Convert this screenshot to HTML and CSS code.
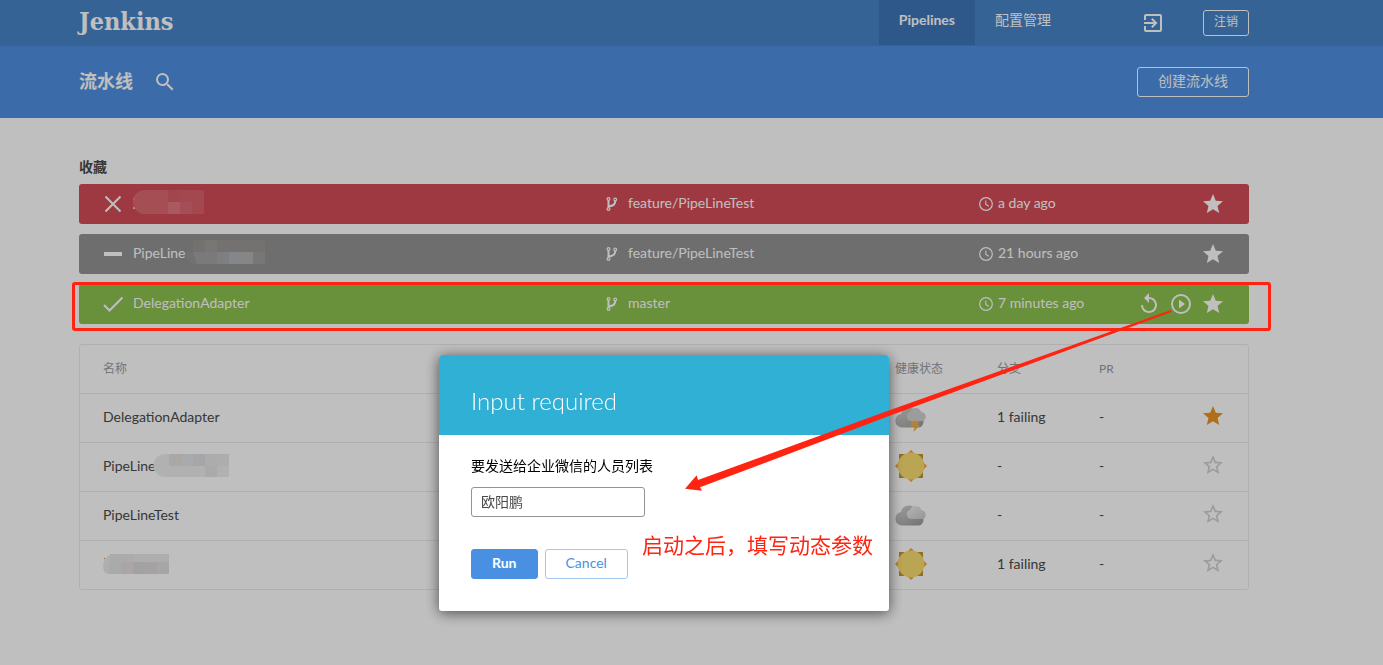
FILE: index.html
```html
<!DOCTYPE html>
<html lang="zh-CN">
<head>
  <meta charset="UTF-8">
  <title>Jenkins Blue Ocean</title>
  <link rel="stylesheet" href="styles.css">
</head>
<body>
  <svg class="sprite" aria-hidden="true">
    <defs>
      <linearGradient id="cloudBack" x1="0" y1="0" x2="1" y2="1">
        <stop offset="0" stop-color="#d4d4d4"/>
        <stop offset="1" stop-color="#989898"/>
      </linearGradient>
      <linearGradient id="cloudFront" x1="0" y1="0" x2="1" y2="1">
        <stop offset="0" stop-color="#f0f0f0"/>
        <stop offset="1" stop-color="#c9c9c9"/>
      </linearGradient>
    </defs>
    <symbol id="star" viewBox="0 0 24 24">
      <path d="M12 17.27L18.18 21l-1.64-7.03L22 9.24l-7.19-.61L12 2 9.19 8.63 2 9.24l5.46 4.73L5.82 21z"/>
    </symbol>
    <symbol id="star-border" viewBox="0 0 24 24">
      <path d="M22 9.24l-7.19-.62L12 2 9.19 8.63 2 9.24l5.46 4.73L5.82 21 12 17.27 18.18 21l-1.63-7.03L22 9.24zM12 15.4l-3.76 2.27 1-4.28-3.32-2.88 4.38-.38L12 6.1l1.71 4.04 4.38.38-3.32 2.88 1 4.28L12 15.4z"/>
    </symbol>
    <symbol id="branch" viewBox="0 0 12 16">
      <g fill="none" stroke="currentColor">
        <circle cx="2.500" cy="3" r="1.400" stroke-width="1.200"/>
        <circle cx="2.500" cy="13" r="1.400" stroke-width="1.200"/>
        <circle cx="9.200" cy="3.500" r="1.400" stroke-width="1.200"/>
        <path d="M2.500 4.400v7.200M9.200 5c.4 4.200-3 5-6.500 5.500" stroke-width="2"/>
      </g>
    </symbol>
    <symbol id="clock" viewBox="0 0 16 16">
      <circle cx="8" cy="8" r="6.300" fill="none" stroke="currentColor" stroke-width="1.200"/>
      <path d="M7.800 4.500v4l3 1.800" fill="none" stroke="currentColor" stroke-width="1.100"/>
    </symbol>
    <symbol id="sun" viewBox="0 0 32 32">
      <rect x="4" y="4" width="24" height="24" fill="#c0952b"/>
      <path d="M16 0l16 16-16 16L0 16z" fill="#f5a130"/>
      <circle cx="16" cy="16" r="13.400" fill="#f9dc71"/>
    </symbol>
    <symbol id="cloud" viewBox="0 0 32 32">
      <path d="M7 26.500a6.800 6.800 0 0 1-1-13.500 8 8 0 0 1 14.500-3l8 9.500v1.500a5.500 5.500 0 0 1-5.500 5.500z" fill="url(#cloudBack)"/>
      <path d="M16 20a4.800 4.800 0 0 1-1-9.300 6 6 0 0 1 11.300.5A4.500 4.500 0 0 1 27.500 20z" fill="url(#cloudFront)"/>
    </symbol>
    <symbol id="storm" viewBox="0 0 32 32">
      <path d="M7 26.500a6.800 6.800 0 0 1-1-13.500 8 8 0 0 1 14.500-3l8 9.500v1.500a5.500 5.500 0 0 1-5.500 5.500z" fill="url(#cloudBack)"/>
      <path d="M16 20a4.800 4.800 0 0 1-1-9.300 6 6 0 0 1 11.300.5A4.500 4.500 0 0 1 27.500 20z" fill="#d2d0d2"/>
      <path d="M17 20h7.500l-2 4h2.500l-6.500 7 1-5.500H15z" fill="#f0ae4a"/>
    </symbol>
  </svg>

  <header class="topbar">
    <a class="logo" href="#">Jenkins</a>
    <nav class="nav">
      <a class="active" href="#">Pipelines</a>
      <a href="#">配置管理</a>
    </nav>
    <a class="exit" href="#" aria-label="Go to classic">
      <svg viewBox="0 0 24 24" width="24" height="24"><path d="M10.090 15.590L11.500 17l5-5-5-5-1.410 1.410L12.670 11H3v2h9.670l-2.580 2.590zM19 3H5a2 2 0 0 0-2 2v4h2V5h14v14H5v-4H3v4a2 2 0 0 0 2 2h14a2 2 0 0 0 2-2V5a2 2 0 0 0-2-2z"/></svg>
    </a>
    <button class="outline logout" type="button">注销</button>
  </header>

  <section class="subheader">
    <h1>流水线</h1>
    <button class="icon-btn" type="button" aria-label="Search">
      <svg viewBox="0 0 24 24" width="24" height="24"><path d="M15.500 14h-.79l-.28-.27A6.470 6.470 0 0 0 16 9.500 6.500 6.500 0 1 0 9.500 16c1.610 0 3.090-.59 4.230-1.570l.27.28v.79l5 4.990L20.490 19l-4.990-5zm-6 0C7.010 14 5 11.990 5 9.500S7.010 5 9.500 5 14 7.010 14 9.500 11.990 14 9.500 14z"/></svg>
    </button>
    <button class="outline create" type="button">创建流水线</button>
  </section>

  <main>
    <h2>收藏</h2>
    <div class="favorites">
      <div class="card failure">
        <div class="name">
          <svg viewBox="0 0 24 24" width="24" height="24"><path d="M4.500 4.500l15 15M19.500 4.500l-15 15" stroke="currentColor" stroke-width="2"/></svg>
          <svg width="72" height="28" viewBox="0 0 72 28">
            <path d="M0 8h2v2H0zM0 17h2v2H0z" fill="#fff" fill-opacity=".7"/>
            <path d="M12 0h57a2 2 0 0 1 2 2v20a2 2 0 0 1-2 2H12A12 12 0 0 1 12 0z" fill="#dd6a70"/>
            <path d="M35 0h12v12H35z" fill="#d85c66"/>
            <path d="M35 12h12v12H35z" fill="#e07880"/>
            <path d="M47 12h12v12H47z" fill="#db6a74"/>
            <path d="M47 0h22a2 2 0 0 1 2 2v20a2 2 0 0 1-2 2H59V12H47z" fill="#d96069"/>
          </svg>
        </div>
        <div class="branch"><svg width="12" height="16"><use href="#branch"/></svg><span>feature/PipeLineTest</span></div>
        <div class="time"><svg width="16" height="16"><use href="#clock"/></svg><span>a day ago</span></div>
        <div class="actions">
          <button class="icon-btn" type="button" aria-label="Unfavorite"><svg width="24" height="24"><use href="#star"/></svg></button>
        </div>
      </div>

      <div class="card aborted">
        <div class="name">
          <svg viewBox="0 0 24 24" width="24" height="24"><path d="M3 10h18v4H3z"/></svg>
          <span>PipeLine</span>
          <svg class="mosaic" width="84" height="28" viewBox="0 0 84 28">
            <path d="M8 3a3 3 0 0 1 3-3h69v24H12Q3 24 0 12h8z" fill="#9b9997"/>
            <path d="M20 0h12v12H20z" fill="#a19f9b"/>
            <path d="M68 12h12v12H68z" fill="#a19f9d"/>
            <path d="M8 12h24v12H12z" fill="#a3a3a7"/>
            <path d="M32 12h12v12H32z" fill="#a8aaaa"/>
            <path d="M44 12h12v12H44z" fill="#b0b3b8"/>
            <path d="M56 12h12v12H56z" fill="#b3b3b1"/>
          </svg>
        </div>
        <div class="branch"><svg width="12" height="16"><use href="#branch"/></svg><span>feature/PipeLineTest</span></div>
        <div class="time"><svg width="16" height="16"><use href="#clock"/></svg><span>21 hours ago</span></div>
        <div class="actions">
          <button class="icon-btn" type="button" aria-label="Unfavorite"><svg width="24" height="24"><use href="#star"/></svg></button>
        </div>
      </div>

      <div class="card success">
        <div class="name">
          <svg viewBox="0 0 24 24" width="24" height="24"><path d="M3 13l5.500 5.500L21.500 5.500" fill="none" stroke="currentColor" stroke-width="2"/></svg>
          <span>DelegationAdapter</span>
        </div>
        <div class="branch"><svg width="12" height="16"><use href="#branch"/></svg><span>master</span></div>
        <div class="time"><svg width="16" height="16"><use href="#clock"/></svg><span>7 minutes ago</span></div>
        <div class="actions">
          <button class="icon-btn" type="button" aria-label="Rerun"><svg viewBox="0 0 24 24" width="24" height="24"><path d="M12 5V1L7 6l5 5V7c3.310 0 6 2.690 6 6s-2.690 6-6 6-6-2.690-6-6H4c0 4.420 3.580 8 8 8s8-3.580 8-8-3.580-8-8-8z"/></svg></button>
          <button class="icon-btn" type="button" aria-label="Run"><svg viewBox="0 0 24 24" width="24" height="24"><path d="M10 16.500l6-4.500-6-4.500v9zM12 2a10 10 0 1 0 0 20 10 10 0 0 0 0-20zm0 18a8 8 0 1 1 0-16 8 8 0 0 1 0 16z"/></svg></button>
          <button class="icon-btn" type="button" aria-label="Unfavorite"><svg width="24" height="24"><use href="#star"/></svg></button>
        </div>
      </div>
    </div>

    <div class="table-box">
      <table>
        <thead>
          <tr>
            <th>名称</th>
            <th class="col-small">健康状态</th>
            <th class="col-small">分支</th>
            <th class="col-small">PR</th>
            <th class="col-fav"></th>
          </tr>
        </thead>
        <tbody>
          <tr>
            <td>DelegationAdapter</td>
            <td><svg width="32" height="32"><use href="#storm"/></svg></td>
            <td>1 failing</td>
            <td>-</td>
            <td class="fav"><button class="icon-btn on" type="button" aria-label="Unfavorite"><svg width="24" height="24"><use href="#star"/></svg></button></td>
          </tr>
          <tr>
            <td>
              <div class="cell">PipeLine<svg class="mosaic" width="76" height="24" viewBox="0 0 76 24">
                <path d="M12 0h64v23H12A11.500 11.500 0 0 1 12 0z" fill="#ededed"/>
                <path d="M16 0h12v12H16z" fill="#e3dfdd"/>
                <path d="M28 0h12v12H28z" fill="#e1e3e7"/>
                <path d="M40 0h12v12H40z" fill="#dedee0"/>
                <path d="M52 0h12v12H52z" fill="#e6e6e7"/>
                <path d="M64 0h12v12H64z" fill="#e7e7e8"/>
                <path d="M52 12h12v11H52z" fill="#e3e3e3"/>
              </svg></div>
            </td>
            <td><svg width="32" height="32"><use href="#sun"/></svg></td>
            <td>-</td>
            <td>-</td>
            <td class="fav"><button class="icon-btn" type="button" aria-label="Favorite"><svg width="24" height="24"><use href="#star-border"/></svg></button></td>
          </tr>
          <tr>
            <td>PipeLineTest</td>
            <td><svg width="32" height="32"><use href="#cloud"/></svg></td>
            <td>-</td>
            <td>-</td>
            <td class="fav"><button class="icon-btn" type="button" aria-label="Favorite"><svg width="24" height="24"><use href="#star-border"/></svg></button></td>
          </tr>
          <tr>
            <td>
              <svg width="68" height="20" viewBox="0 0 68 20">
                <path d="M10 0h56v20H6Q0 20 0 11 2 1 10 0z" fill="#e9e9ea"/>
                <path d="M7 0h24v8H7z" fill="#e5e5e6"/>
                <path d="M6 8h12v12H6z" fill="#e2e5e4"/>
                <path d="M18 8h12v12H18z" fill="#e2dedd"/>
                <path d="M30 8h12v12H30z" fill="#d9d9da"/>
                <path d="M42 8h12v12H42z" fill="#dcd9d7"/>
                <path d="M54 8h12v12H54z" fill="#dddee1"/>
                <path d="M1 4h1v1H1z" fill="#c08040"/>
              </svg>
            </td>
            <td><svg width="32" height="32"><use href="#sun"/></svg></td>
            <td>1 failing</td>
            <td>-</td>
            <td class="fav"><button class="icon-btn" type="button" aria-label="Favorite"><svg width="24" height="24"><use href="#star-border"/></svg></button></td>
          </tr>
        </tbody>
      </table>
    </div>
  </main>

  <div class="overlay">
    <form class="dialog" role="dialog" aria-labelledby="dialogTitle">
      <div class="dialog-head">
        <h3 id="dialogTitle">Input required</h3>
      </div>
      <div class="dialog-body">
        <label for="people">要发送给企业微信的人员列表</label>
        <input id="people" type="text" value="欧阳鹏">
        <div class="buttons">
          <button class="run" type="submit">Run</button>
          <button class="cancel" type="button">Cancel</button>
        </div>
      </div>
    </form>
  </div>

  <!-- notes drawn on top of the page -->
  <svg class="marks" width="1383" height="665" viewBox="0 0 1383 665" aria-hidden="true">
    <rect x="73.500" y="283.500" width="1196" height="46" rx="1.500" fill="none" stroke="#ff2312" stroke-width="3"/>
    <path d="M685 488.700L696.700 475.300 698 480 886.700 411.300 1171 310 1171.500 312 889 416 700 487.300 702 490.700z" fill="#ff2312"/>
  </svg>
  <p class="note">启动之后，填写动态参数</p>
</body>
</html>
```
FILE: styles.css
```css
* {
  box-sizing: border-box;
}

body {
  margin: 0;
  min-height: 100vh;
  background-color: white;
  color: #4a4a4a;
  font-family: Lato, "Noto Sans CJK SC", sans-serif;
  font-size: 14px;
  line-height: 20px;
}

button,
input {
  font-family: inherit;
  font-size: 14px;
}

h1, h2, h3, p {
  margin: 0;
}

a {
  color: inherit;
  text-decoration: none;
}

svg {
  display: block;
  fill: currentColor;
  flex: none;
}

.sprite {
  position: absolute;
  width: 0;
  height: 0;
}

.icon-btn {
  padding: 0;
  border: none;
  background: none;
  color: inherit;
  cursor: pointer;
}

/* header */

.topbar {
  display: flex;
  align-items: center;
  height: 46px;
  padding: 0 134px 0 79px;
  background-color: #4784c8;
  color: white;
}

.logo {
  padding-bottom: 2px;
  font-family: "DejaVu Serif Condensed", "Liberation Serif", serif;
  font-size: 25px;
  font-weight: bold;
}

.nav {
  display: flex;
  align-self: flex-start;
  margin-left: auto;
  margin-right: 70px;
}

.nav a {
  height: 45px;
  padding: 0 20px;
  line-height: 40px;
}

.nav .active {
  background-color: #3f76b8;
  font-weight: bold;
}

.exit {
  margin-right: 38px;
}

.outline {
  border: 1px solid white;
  border-radius: 3px;
  background: none;
  color: white;
  cursor: pointer;
}

.logout {
  height: 26px;
  padding: 0 10px 2px;
  font-size: 12px;
  line-height: 20px;
}

.subheader {
  display: flex;
  align-items: center;
  height: 72px;
  padding: 0 134px 0 79px;
  background-color: #4f91e2;
  color: white;
}

.subheader h1 {
  margin-right: 20px;
  padding-bottom: 2px;
  font-size: 18px;
}

.create {
  height: 30px;
  margin-left: auto;
  padding: 0 20px 4px;
}

/* favorites */

main {
  padding: 39px 134px 0 79px;
}

h2 {
  margin-bottom: 7px;
  font-size: 14px;
}

.favorites {
  display: flex;
  flex-direction: column;
  gap: 10px;
  margin-bottom: 20px;
}

.card {
  display: grid;
  grid-template-columns: 505fr 372fr 140fr 107fr;
  align-items: center;
  height: 40px;
  padding: 0 24px 0 22px;
  border-radius: 3px;
  color: white;
}

.card span {
  padding-bottom: 2px;
}

.failure {
  background-color: #d54c57;
}

.aborted {
  background-color: #949393;
}

.success {
  background-color: #8cc04f;
}

.name,
.branch,
.time,
.actions {
  display: flex;
  align-items: center;
}

.name {
  gap: 8px;
}

.name .mosaic {
  margin-left: -9px;
}

.branch {
  gap: 10px;
}

.time {
  gap: 4px;
}

.actions {
  justify-content: flex-end;
  gap: 8px;
}

/* pipeline table */

.table-box {
  border: 1px solid #ebebec;
  border-radius: 3px;
}

table {
  width: 100%;
  border-collapse: separate;
  border-spacing: 0;
  table-layout: fixed;
}

th,
td {
  height: 49px;
  padding: 0;
  text-align: left;
}

th {
  height: 48px;
  color: #9a9aa2;
  font-size: 12px;
  font-weight: normal;
}

td {
  padding-bottom: 2px;
  border-top: 1px solid #ebebec;
}

th:first-child,
td:first-child {
  padding-left: 23px;
}

.col-small {
  width: 102px;
}

.col-fav {
  width: 47px;
}

.cell {
  display: flex;
  align-items: center;
}

.cell .mosaic {
  margin-left: -3px;
}

td.fav {
  padding: 0 23px 4px 0;
  color: #cfcfd2;
}

.fav .icon-btn {
  display: block;
}

.fav .on {
  color: #e89420;
}

/* dialog */

.overlay {
  position: fixed;
  inset: 0;
  display: flex;
  justify-content: center;
  align-items: flex-start;
  padding: 355px 55px 0 0;
  background-color: rgba(0, 0, 0, 0.25);
}

.dialog {
  width: 450px;
  overflow: hidden;
  border-radius: 3px;
  background-color: white;
  box-shadow: 0 2px 14px rgba(0, 0, 0, 0.6);
}

.dialog-head {
  padding: 30px 32px 18px;
  background-color: #30b0d5;
  color: white;
}

.dialog-head h3 {
  font-size: 24px;
  font-weight: 300;
  line-height: 32px;
}

.dialog-body {
  padding: 20px 32px 32px;
}

.dialog-body label {
  display: block;
  margin-bottom: 10px;
  color: black;
  line-height: 22px;
}

.dialog-body input {
  display: block;
  width: 174px;
  height: 30px;
  padding: 0 9px 3px;
  border: 1px solid #949393;
  border-radius: 3px;
  color: #4a4a4a;
}

.buttons {
  display: flex;
  gap: 7px;
  margin-top: 32px;
}

.buttons button {
  height: 30px;
  padding: 0 20px 3px;
  border: 1px solid #4a90e2;
  border-radius: 3px;
  cursor: pointer;
}

.buttons .run {
  background-color: #4a90e2;
  color: white;
  font-weight: bold;
}

.buttons .cancel {
  border-color: #a4c7f0;
  background-color: white;
  color: #4a90e2;
}

/* notes */

.marks {
  position: absolute;
  top: 0;
  left: 0;
  pointer-events: none;
}

.note {
  position: absolute;
  top: 529px;
  left: 642px;
  color: #ff2312;
  font-size: 21px;
  line-height: 32px;
}
```
